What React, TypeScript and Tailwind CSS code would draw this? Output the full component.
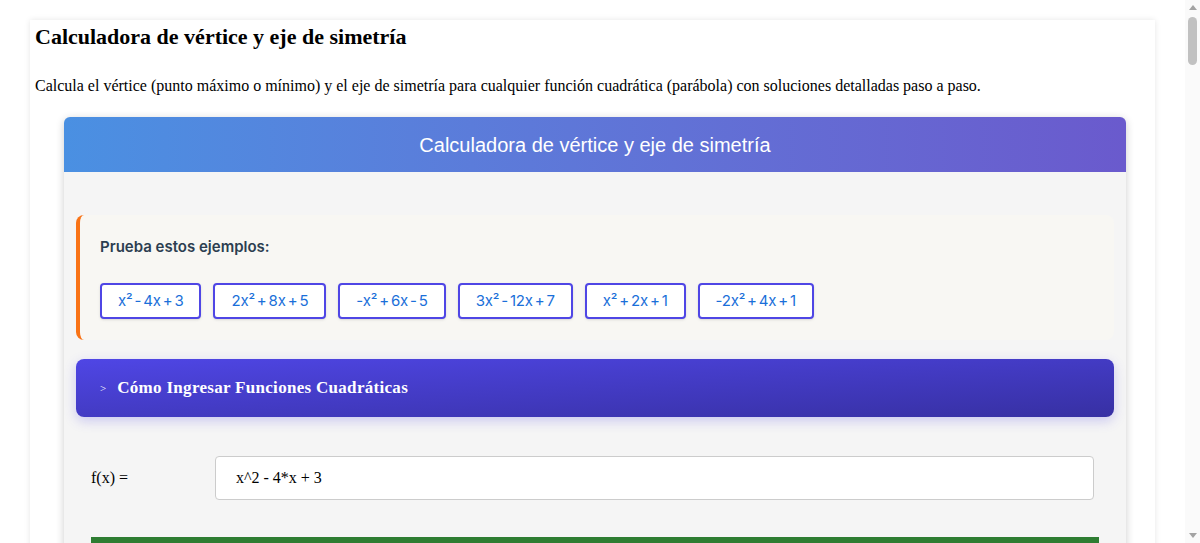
const examples = ['x² - 4x + 3', '2x² + 8x + 5', '-x² + 6x - 5', '3x² - 12x + 7', 'x² + 2x + 1', '-2x² + 4x + 1']

const sans = { fontFamily: 'Inter, "Open Sans", sans-serif' }

function Examples() {
  return (
    <div className="rounded-lg border-l-4 border-[#f97316] bg-[#f8f7f3] pl-5 pr-5 pt-[22px] pb-[21px]">
      <p className="text-[15px] font-semibold leading-[20px] text-[#2c3e50]" style={sans}>
        Prueba estos ejemplos:
      </p>
      <div className="mt-[26px] flex flex-wrap gap-3">
        {examples.map((ex) => (
          <button
            key={ex}
            className="h-9 rounded border-2 border-[#4f46e5] bg-white px-4 text-[15px] tracking-[-0.2px] text-[#1a6fd9] shadow-sm [word-spacing:-2px]"
            style={sans}
          >
            {ex}
          </button>
        ))}
      </div>
    </div>
  )
}

function HowTo() {
  return (
    <div className="mt-[19px] flex h-[58px] items-center rounded-lg bg-gradient-to-br from-[#4f46e5] to-[#3730a3] px-6 text-white shadow-[0_4px_12px_rgba(79,70,229,0.25)]">
      <span className="text-[11px]" style={{ fontFamily: '"Liberation Serif", serif' }}>&gt;</span>
      <span className="ml-[11px] text-[17px] font-bold tracking-[0.3px]" style={{ fontFamily: '"Liberation Serif", serif' }}>
        Cómo Ingresar Funciones Cuadráticas
      </span>
    </div>
  )
}

// the page scrolls in the reference, so draw the browser's scrollbar
function ScrollBar() {
  return (
    <div className="fixed right-0 top-0 flex h-full w-[15px] flex-col items-center bg-[#fafafa]">
      <div className="mt-[5px] h-0 w-0 border-x-[4px] border-b-[5px] border-x-transparent border-b-[#a3a3a3]" />
      <div className="mt-[7px] h-[48px] w-[9px] rounded-full bg-[#c1c1c1]" />
      <div className="mt-auto mb-[5px] h-0 w-0 border-x-[4px] border-t-[5px] border-x-transparent border-t-[#a3a3a3]" />
    </div>
  )
}

export default function App() {
  return (
    <div className="min-h-[900px] bg-white pt-5" style={{ fontFamily: '"Liberation Serif", "Times New Roman", serif' }}>
      <ScrollBar />
      <div className="ml-[30px] mr-[45px] bg-white px-[5px] pt-1 pb-10 shadow-[0_0_6px_rgba(0,0,0,0.1)]">
        <h2 className="text-[22px] font-bold leading-[25px] text-black">Calculadora de vértice y eje de simetría</h2>
        <p className="mt-[28px] text-base leading-[18px] text-black">
          Calcula el vértice (punto máximo o mínimo) y el eje de simetría para cualquier función cuadrática (parábola) con soluciones detalladas paso a paso.
        </p>

        <div className="ml-[29px] mt-[22px] w-[1062px] overflow-hidden rounded-md bg-[#f5f5f5] shadow-[0_2px_8px_rgba(0,0,0,0.2)]">
          <div className="flex h-[55px] items-center justify-center bg-gradient-to-r from-[#4a90e2] to-[#6a5acd]">
            <h3 className="text-[20px] text-white" style={{ fontFamily: '"Liberation Sans", Arial, sans-serif' }}>
              Calculadora de vértice y eje de simetría
            </h3>
          </div>

          <div className="px-3 pt-[43px] pb-10">
            <Examples />
            <HowTo />

            <div className="mt-[39px] flex items-center pl-[15px] pr-5">
              <label className="w-[124px] text-base text-black">f(x) =</label>
              <input
                defaultValue="x^2 - 4*x + 3"
                className="h-11 flex-1 rounded border border-[#ccc] bg-white px-5 text-base text-black outline-none"
              />
            </div>

            <button className="mx-[15px] mt-[37px] h-12 w-[1008px] bg-[#2e7d32] text-lg text-white">
              Calcular
            </button>
          </div>
        </div>
      </div>
    </div>
  )
}
